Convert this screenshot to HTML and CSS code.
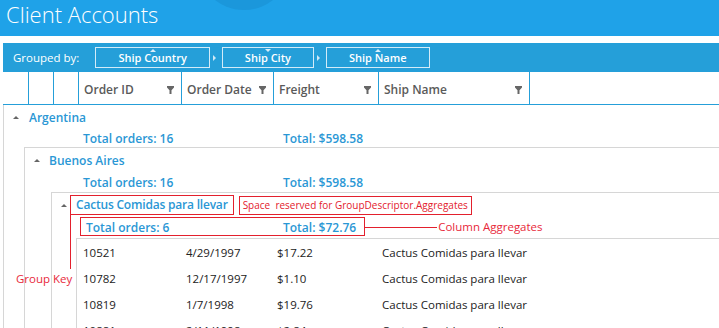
FILE: index.html
```html
<!DOCTYPE html>
<html lang="en">
<head>
    <meta charset="UTF-8">
    <meta name="viewport" content="width=device-width, initial-scale=1.0">
    <title>Client Accounts</title>
    <link rel="stylesheet" href="styles.css">
</head>
<body>
    <header class="title-bar">
        <h1 class="title">Client Accounts</h1>
        <span class="title-bubble"></span>
    </header>

    <div class="grid">
        <div class="group-panel">
            <span class="group-panel-label">Grouped by:</span>
            <span class="group-chip sort-asc">Ship Country</span>
            <span class="chip-arrow"></span>
            <span class="group-chip sort-desc">Ship City</span>
            <span class="chip-arrow"></span>
            <span class="group-chip sort-asc">Ship Name</span>
        </div>

        <div class="header-row">
            <div class="hcell col-indent-0"></div>
            <div class="hcell col-indent"></div>
            <div class="hcell col-indent"></div>
            <div class="hcell col-id">Order ID
                <svg class="funnel" width="7" height="8" viewBox="0 0 7 8"><path d="M0 0H7V1.5L4.5 4.2V8H2.5V4.2L0 1.5Z"/></svg>
            </div>
            <div class="hcell col-date">Order Date
                <svg class="funnel" width="7" height="8" viewBox="0 0 7 8"><path d="M0 0H7V1.5L4.5 4.2V8H2.5V4.2L0 1.5Z"/></svg>
            </div>
            <div class="hcell col-freight">Freight
                <svg class="funnel" width="7" height="8" viewBox="0 0 7 8"><path d="M0 0H7V1.5L4.5 4.2V8H2.5V4.2L0 1.5Z"/></svg>
            </div>
            <div class="hcell col-name">Ship Name
                <svg class="funnel" width="7" height="8" viewBox="0 0 7 8"><path d="M0 0H7V1.5L4.5 4.2V8H2.5V4.2L0 1.5Z"/></svg>
            </div>
        </div>

        <div class="grid-body">
            <div class="group-row">
                <span class="toggle toggle-first"></span>
                <span>Argentina</span>
            </div>
            <div class="agg-row agg-row-0">
                <span class="agg-count">Total orders: 16</span>
                <span>Total: $598.58</span>
            </div>

            <div class="group level-1">
                <div class="group-row">
                    <span class="toggle"></span>
                    <span>Buenos Aires</span>
                </div>
                <div class="agg-row agg-row-1">
                    <span class="agg-count">Total orders: 16</span>
                    <span>Total: $598.58</span>
                </div>

                <div class="group level-2">
                    <div class="group-row">
                        <span class="toggle"></span>
                        <span class="group-key">Cactus Comidas para llevar
                            <span class="key-line"></span>
                            <span class="callout callout-key">Group Key</span>
                        </span>
                        <span class="reserved">Space&nbsp; reserved for GroupDescriptor.Aggregates</span>
                    </div>
                    <div class="agg-row agg-row-2">
                        <div class="agg-box">
                            <span class="agg-count-inner">Total orders: 6</span>
                            <span>Total: $72.76</span>
                            <span class="agg-line"></span>
                            <span class="callout callout-agg">Column Aggregates</span>
                        </div>
                    </div>

                    <div class="group level-3">
                        <div class="data-row">
                            <span class="c-id">10521</span>
                            <span class="c-date">4/29/1997</span>
                            <span class="c-freight">$17.22</span>
                            <span>Cactus Comidas para llevar</span>
                        </div>
                        <div class="data-row">
                            <span class="c-id">10782</span>
                            <span class="c-date">12/17/1997</span>
                            <span class="c-freight">$1.10</span>
                            <span>Cactus Comidas para llevar</span>
                        </div>
                        <div class="data-row">
                            <span class="c-id">10819</span>
                            <span class="c-date">1/7/1998</span>
                            <span class="c-freight">$19.76</span>
                            <span>Cactus Comidas para llevar</span>
                        </div>
                        <div class="data-row">
                            <span class="c-id">10881</span>
                            <span class="c-date">2/11/1998</span>
                            <span class="c-freight">$2.84</span>
                            <span>Cactus Comidas para llevar</span>
                        </div>
                    </div>
                </div>
            </div>
        </div>
    </div>
</body>
</html>
```

FILE: styles.css
```css
* {
    box-sizing: border-box;
}

html, body {
    margin: 0;
    height: 100%;
    overflow: hidden;
}

body {
    font-family: "Open Sans", "Noto Sans", sans-serif;
    font-size: 11.5px;
    color: #222;
    background: #fff;
}

/* title */
.title-bar {
    position: relative;
    height: 36px;
    margin-bottom: 7px;
    background: #1fa2e8;
    overflow: hidden;
}

.title {
    margin: 0;
    padding: 0 6px;
    font-size: 22px;
    font-weight: 300;
    line-height: 28px;
    color: #fff;
}

.title-bubble {
    position: absolute;
    left: 197px;
    top: -84px;
    width: 94px;
    height: 94px;
    border-radius: 50%;
    background: #1b97db;
}

/* grid */
.grid {
    margin-left: 3px;
}

.group-panel {
    display: flex;
    align-items: center;
    height: 29px;
    padding-left: 10px;
    background: #259fd9;
    color: #fff;
}

.group-panel-label {
    margin-right: 16px;
    font-size: 11.5px;
}

.group-chip {
    position: relative;
    height: 21px;
    padding: 0 22px;
    border: 1px solid #d3ebf8;
    font-size: 11px;
    font-weight: 600;
    line-height: 19px;
}

.group-chip::before {
    content: "";
    position: absolute;
    top: 1px;
    left: 50%;
    margin-left: -3px;
    border-left: 3px solid transparent;
    border-right: 3px solid transparent;
}

.sort-asc::before {
    border-bottom: 3px solid #d9eefa;
}

.sort-desc::before {
    border-top: 3px solid #d9eefa;
}

.chip-arrow {
    margin: 0 6px 0 3px;
    border-top: 3px solid transparent;
    border-bottom: 3px solid transparent;
    border-left: 3px solid #cfe8f6;
}

.header-row {
    display: flex;
    height: 33px;
    border-bottom: 1px solid #259fd9;
}

.hcell {
    display: flex;
    align-items: center;
    justify-content: space-between;
    flex: none;
    height: 100%;
    padding: 3px 7px 0 5px;
    border-right: 1px solid #259fd9;
    color: #5a5a5a;
    font-size: 12px;
    font-weight: 600;
}

.col-indent-0 { width: 26px; }
.col-indent { width: 25px; }
.col-id { width: 103px; }
.col-date { width: 92px; }
.col-freight { width: 105px; }
.col-name { width: 151px; }

.funnel {
    fill: #666;
}

/* groups */
.grid-body {
    border-left: 1px solid #d6d6d6;
}

.group {
    border-top: 1px solid #d6d6d6;
    border-left: 1px solid #d6d6d6;
}

.level-1 { margin-left: 20px; }
.level-2 { margin-left: 26px; }
.level-3 { margin-left: 24px; }

.group-row {
    display: flex;
    align-items: center;
    height: 24px;
    color: #2a97d5;
    font-size: 12px;
    font-weight: 600;
}

.toggle {
    flex: none;
    width: 24px;
    padding-left: 9px;
}

.toggle-first {
    width: 25px;
}

.toggle::before {
    content: "";
    display: block;
    width: 0;
    border-left: 3px solid transparent;
    border-right: 3px solid transparent;
    border-bottom: 3px solid #666;
}

.group-key {
    position: relative;
    margin-left: -6px;
    padding: 0 5px;
    border: 1px solid #e3202d;
    letter-spacing: -0.2px;
    line-height: 18px;
}

.reserved {
    margin-left: 5px;
    padding: 0 3px;
    border: 1px solid #e3202d;
    color: #e3202d;
    font-size: 10px;
    font-weight: 400;
    line-height: 17px;
}

.agg-row {
    display: flex;
    align-items: center;
    color: #2a97d5;
    font-size: 12px;
    font-weight: 600;
}

.agg-row-0 {
    height: 18px;
    padding-left: 79px;
}

.agg-row-1 {
    height: 20px;
    padding-left: 58px;
}

.agg-row-2 {
    align-items: flex-start;
    height: 21px;
    padding-left: 28px;
}

.agg-count {
    width: 200px;
}

.agg-box {
    position: relative;
    display: flex;
    align-items: center;
    height: 19px;
    padding: 1px 8px 0 5px;
    border: 1px solid #e3202d;
}

.agg-count-inner {
    width: 197px;
}

/* annotations */
.key-line {
    position: absolute;
    left: -1px;
    top: 100%;
    height: 55px;
    border-left: 1px solid #e3202d;
}

.agg-line {
    position: absolute;
    left: 100%;
    top: 50%;
    width: 73px;
    border-top: 1px solid #e3202d;
}

.callout {
    position: absolute;
    color: #e8283a;
    font-size: 11.5px;
    font-weight: 400;
    letter-spacing: 0;
    line-height: 16px;
    white-space: nowrap;
}

.callout-key {
    left: -55px;
    top: calc(100% + 57px);
}

.callout-agg {
    left: calc(100% + 74px);
    top: 1px;
}

/* data */
.data-row {
    display: flex;
    align-items: center;
    height: 26px;
    padding-left: 2px;
}

.data-row span {
    padding-left: 4px;
}

.c-id { width: 103px; }
.c-date { width: 91px; }
.c-freight { width: 105px; }
```
